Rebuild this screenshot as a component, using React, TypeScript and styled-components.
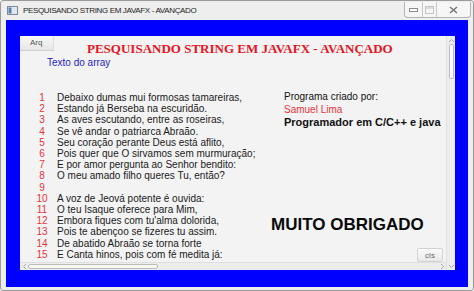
import styled, { createGlobalStyle } from "styled-components";

const GlobalStyle = createGlobalStyle`
  html, body {
    margin: 0;
    padding: 0;
    background: #ffffff;
  }
  body {
    font-family: "Liberation Sans", Arial, sans-serif;
  }
`;

const lines = [
  "Debaixo dumas mui formosas tamareiras,",
  "Estando já Berseba na escuridão.",
  "As aves escutando, entre as roseiras,",
  "Se vê andar o patriarca Abraão.",
  "Seu coração perante Deus está aflito,",
  "Pois quer que O sirvamos sem murmuração;",
  "E por amor pergunta ao Senhor bendito:",
  "O meu amado filho queres Tu, então?",
  "",
  "A voz de Jeová potente é ouvida:",
  "O teu Isaque oferece para Mim,",
  "Embora fiques com tu'alma dolorida,",
  "Pois te abençoo se fizeres tu assim.",
  "De abatido Abraão se torna forte",
  "E Canta hinos, pois com fé medita já:",
];

const App = () => {
  return (
    <>
      <GlobalStyle />
      <Window>
        <TitleBar>
          <AppIcon>
            <svg width="11" height="9" viewBox="0 0 11 9">
              <rect x="0.5" y="0.5" width="10" height="8" fill="#dfe6ee" stroke="#7d8a99" />
              <rect x="1.5" y="1.5" width="3" height="6" fill="#5a7fa8" />
            </svg>
          </AppIcon>
          <WindowTitle>PESQUISANDO STRING EM JAVAFX - AVANÇADO</WindowTitle>
          <Controls>
            <ControlButton $width={17}>
              <svg width="9" height="4" viewBox="0 0 9 4">
                <rect x="0.5" y="0.5" width="8" height="3" fill="#fff" stroke="#8d8d8d" />
              </svg>
            </ControlButton>
            <ControlButton $width={13}>
              <svg width="9" height="8" viewBox="0 0 9 8">
                <rect x="0.5" y="0.5" width="8" height="7" fill="none" stroke="#c4c4c4" />
                <line x1="1" y1="2" x2="8" y2="2" stroke="#c4c4c4" />
              </svg>
            </ControlButton>
            <ControlButton $width={33}>
              <svg width="9" height="8" viewBox="0 0 9 8">
                <path d="M1 1 L8 7 M8 1 L1 7" stroke="#7a7a7a" strokeWidth="1.6" />
              </svg>
            </ControlButton>
          </Controls>
        </TitleBar>

        <BlueStage>
          <Panel>
            <Content>
              <HeaderRow>
                <MenuButton>Arq</MenuButton>
                <MainTitle>PESQUISANDO STRING EM JAVAFX - AVANÇADO</MainTitle>
              </HeaderRow>
              <ArrayLabel>Texto do array</ArrayLabel>

              <MainRow>
                <Poem>
                  {lines.map((line, index) => (
                    <PoemLine key={index}>
                      <LineNumber>{index + 1}</LineNumber>
                      <LineText>{line}</LineText>
                    </PoemLine>
                  ))}
                </Poem>

                <SideColumn>
                  <Credits>
                    <CreditLine>Programa criado por:</CreditLine>
                    <CreditLine $red>Samuel Lima</CreditLine>
                    <CreditLine $bold>Programador em C/C++ e java</CreditLine>
                  </Credits>
                  <Thanks>MUITO OBRIGADO</Thanks>
                  <ClsButton>cls</ClsButton>
                </SideColumn>
              </MainRow>
            </Content>

            <VScroll>
              <ArrowCell>
                <svg width="7" height="5" viewBox="0 0 7 5">
                  <path d="M1 4 L3.5 1.5 L6 4" fill="none" stroke="#a8a8a8" />
                </svg>
              </ArrowCell>
              <VThumb />
              <Spacer />
              <ArrowCell>
                <svg width="7" height="5" viewBox="0 0 7 5">
                  <path d="M1 1 L3.5 3.5 L6 1" fill="none" stroke="#a8a8a8" />
                </svg>
              </ArrowCell>
            </VScroll>

            <HScroll>
              <ArrowCell>
                <svg width="5" height="7" viewBox="0 0 5 7">
                  <path d="M4 1 L1.5 3.5 L4 6" fill="none" stroke="#a8a8a8" />
                </svg>
              </ArrowCell>
              <HThumb />
              <Spacer />
              <ArrowCell>
                <svg width="5" height="7" viewBox="0 0 5 7">
                  <path d="M1 1 L3.5 3.5 L1 6" fill="none" stroke="#a8a8a8" />
                </svg>
              </ArrowCell>
            </HScroll>
          </Panel>
        </BlueStage>
      </Window>
    </>
  );
};

const Window = styled.div`
  width: 474px;
  height: 291px;
  box-sizing: border-box;
  border: 1px solid #9a9a9a;
  border-radius: 3px;
  background: #eeeeee;
  display: flex;
  flex-direction: column;
  padding: 0 5px 3px 5px;
`;

const TitleBar = styled.div`
  height: 19px;
  display: flex;
  align-items: center;
  gap: 4px;
  padding-left: 1px;
`;

const AppIcon = styled.div`
  display: flex;
  align-items: center;
  width: 12px;
`;

const WindowTitle = styled.span`
  font-family: "Liberation Sans", Arial, sans-serif;
  font-size: 8px;
  letter-spacing: -0.35px;
  color: #1c1c1c;
`;

const Controls = styled.div`
  margin-left: auto;
  margin-right: -3px;
  align-self: flex-start;
  margin-top: 1px;
  display: flex;
  height: 15px;
  border: 1px solid #b4b4b4;
  border-top: none;
  border-radius: 0 0 4px 4px;
  background: #f6f6f6;
  overflow: hidden;
`;

const ControlButton = styled.div<{ $width: number }>`
  width: ${({ $width }) => $width}px;
  display: flex;
  align-items: center;
  justify-content: center;
  & + & {
    border-left: 1px solid #c8c8c8;
  }
`;

const BlueStage = styled.div`
  flex: 1;
  background: #0000ff;
  padding: 16px 13px 17px 14px;
  display: flex;
`;

const Panel = styled.div`
  flex: 1;
  background: #f3f3f3;
  display: grid;
  grid-template-columns: 1fr 9px;
  grid-template-rows: 1fr 8px;
`;

const Content = styled.div`
  grid-column: 1;
  grid-row: 1;
  display: flex;
  flex-direction: column;
  min-height: 0;
  overflow: hidden;
`;

const HeaderRow = styled.div`
  height: 20px;
  display: flex;
  align-items: flex-start;
`;

const MenuButton = styled.div`
  width: 34px;
  height: 15px;
  box-sizing: border-box;
  background: linear-gradient(#f8f8f8, #e6e6e6);
  border-bottom: 1px solid #cfcfcf;
  border-right: 1px solid #dcdcdc;
  font-size: 8px;
  color: #555555;
  padding: 2px 0 0 10px;
`;

const MainTitle = styled.div`
  margin: 5px 0 0 33px;
  font-family: "Liberation Serif", "Times New Roman", serif;
  font-weight: bold;
  font-size: 13px;
  line-height: 15px;
  color: #e8141e;
  white-space: nowrap;
`;

const ArrayLabel = styled.div`
  margin: 1px 0 0 27px;
  font-size: 10px;
  line-height: 12px;
  color: #2424c8;
`;

const MainRow = styled.div`
  flex: 1;
  display: flex;
  margin-top: 23px;
  min-height: 0;
`;

const Poem = styled.div`
  width: 237px;
  padding-left: 14px;
  display: flex;
  flex-direction: column;
`;

const PoemLine = styled.div`
  display: flex;
  align-items: center;
  gap: 7px;
  height: 11.2px;
  font-size: 10px;
  white-space: nowrap;
`;

const LineNumber = styled.span`
  width: 16px;
  text-align: center;
  color: #e8343c;
`;

const LineText = styled.span`
  color: #1a1a1a;
`;

const SideColumn = styled.div`
  flex: 1;
  display: flex;
  flex-direction: column;
`;

const Credits = styled.div`
  padding-left: 13px;
  margin-top: -1px;
  display: flex;
  flex-direction: column;
`;

const CreditLine = styled.div<{ $red?: boolean; $bold?: boolean }>`
  height: 12.5px;
  line-height: 12.5px;
  font-size: ${({ $bold }) => ($bold ? "11px" : "10px")};
  font-weight: ${({ $bold }) => ($bold ? "bold" : "normal")};
  color: ${({ $red }) => ($red ? "#e8343c" : "#111111")};
  white-space: nowrap;
`;

const Thanks = styled.div`
  margin-top: 86px;
  font-size: 17px;
  font-weight: bold;
  line-height: 20px;
  color: #0a0a0a;
  white-space: nowrap;
`;

const ClsButton = styled.div`
  margin-top: auto;
  margin-right: 3px;
  align-self: flex-end;
  width: 26px;
  height: 14px;
  box-sizing: border-box;
  border: 1px solid #d2d2d2;
  border-radius: 2px;
  background: linear-gradient(#fbfbfb, #e9e9e9);
  font-size: 8px;
  color: #666666;
  display: flex;
  align-items: center;
  justify-content: center;
`;

const VScroll = styled.div`
  grid-column: 2;
  grid-row: 1 / span 2;
  background: #ececec;
  border-left: 1px solid #e0e0e0;
  display: flex;
  flex-direction: column;
  align-items: center;
`;

const HScroll = styled.div`
  grid-column: 1;
  grid-row: 2;
  background: #ececec;
  border-top: 1px solid #e0e0e0;
  display: flex;
  align-items: center;
`;

const ArrowCell = styled.div`
  width: 8px;
  height: 8px;
  display: flex;
  align-items: center;
  justify-content: center;
`;

const VThumb = styled.div`
  width: 5px;
  height: 35px;
  box-sizing: border-box;
  border: 1px solid #bdbdbd;
  border-radius: 2px;
  background: #f7f7f7;
`;

const HThumb = styled.div`
  width: 130px;
  height: 5px;
  box-sizing: border-box;
  border: 1px solid #bdbdbd;
  border-radius: 2px;
  background: #f7f7f7;
`;

const Spacer = styled.div`
  flex: 1;
`;

export default App;
